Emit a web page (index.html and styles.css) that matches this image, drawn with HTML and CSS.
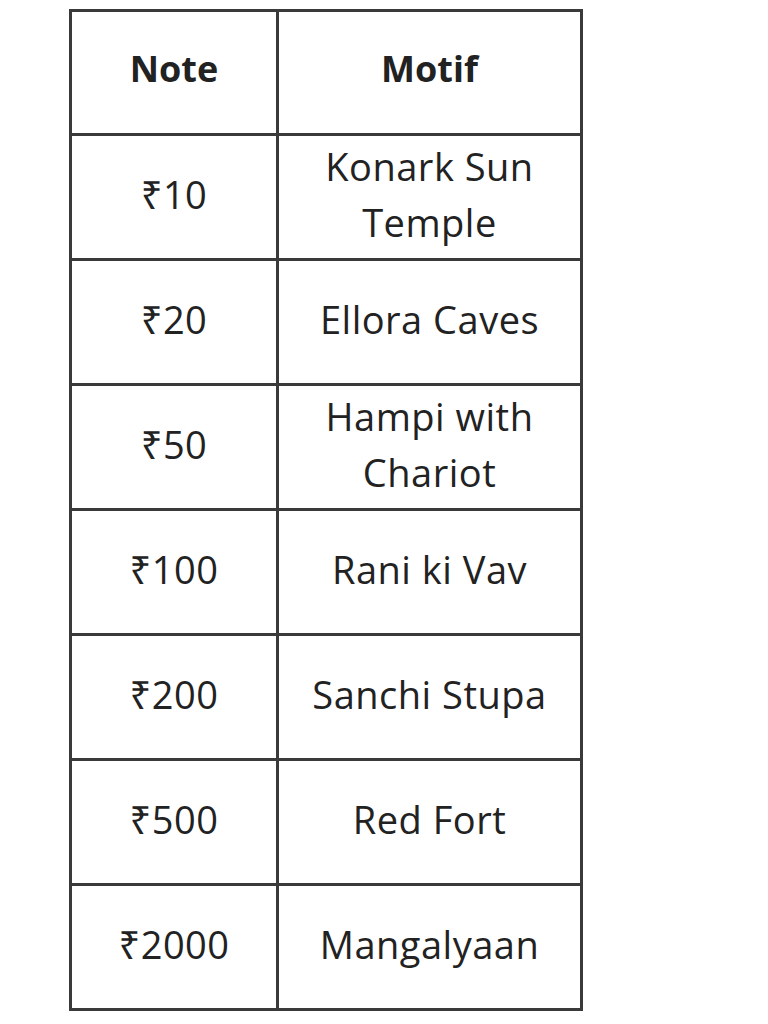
FILE: index.html
```html
<!DOCTYPE html>
<html>
<head>
<meta charset="utf-8">
<link rel="stylesheet" href="styles.css">
</head>
<body>
<div class="page">
<table class="notes">
<thead>
<tr><th class="c1">Note</th><th class="c2">Motif</th></tr>
</thead>
<tbody>
<tr><td>₹10</td><td>Konark Sun<br>Temple</td></tr>
<tr><td>₹20</td><td>Ellora Caves</td></tr>
<tr><td>₹50</td><td>Hampi with<br>Chariot</td></tr>
<tr><td>₹100</td><td>Rani ki Vav</td></tr>
<tr><td>₹200</td><td>Sanchi Stupa</td></tr>
<tr><td>₹500</td><td>Red Fort</td></tr>
<tr><td>₹2000</td><td>Mangalyaan</td></tr>
</tbody>
</table>
</div>
</body>
</html>
```
FILE: styles.css
```css
html, body {
  margin: 0;
  padding: 0;
  background: #ffffff;
}
.page {
  padding: 9px 0 0 69px;
}
.notes {
  border-collapse: collapse;
  width: 500px;
  table-layout: fixed;
  font-family: "Open Sans", "Noto Sans", sans-serif;
  color: #222222;
}
.notes th, .notes td {
  border: 3px solid #3a3a3a;
  text-align: center;
  vertical-align: middle;
  height: 115px;
  padding: 0 0 7px 0;
  font-size: 38px;
  letter-spacing: 0.5px;
  line-height: 56px;
}
.notes th {
  font-weight: bold;
  font-size: 36px;
  letter-spacing: 0;
  height: 114px;
}
.c1 { width: 204px; }
.c2 { width: 301px; }
```
